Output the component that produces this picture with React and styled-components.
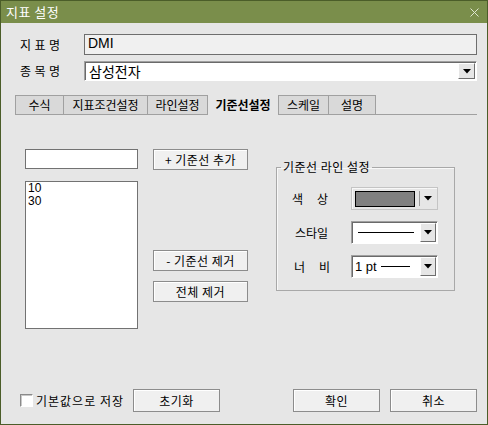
import React from "react";
import styled, { createGlobalStyle } from "styled-components";

const GlobalStyle = createGlobalStyle`
  html, body {
    margin: 0;
    padding: 0;
    background: #e6e6e6;
  }
  body {
    font-family: "Noto Sans CJK KR", "Liberation Sans", sans-serif;
    font-size: 12px;
    color: #000;
  }
  * {
    box-sizing: border-box;
  }
`

const Window = styled.div`
  width: 488px;
  height: 425px;
  display: flex;
  flex-direction: column;
  border: 1px solid #4b5d29;
  background: #e6e6e6;
`

const TitleBar = styled.div`
  height: 22px;
  flex: 0 0 22px;
  display: flex;
  align-items: center;
  justify-content: space-between;
  padding: 0 8px 0 5px;
  background: #7a8e4b;
  color: #fff;
  font-size: 13px;
  line-height: 16px;
  letter-spacing: 0.5px;
`

const Body = styled.div`
  flex: 1;
  display: flex;
  flex-direction: column;
  padding: 11px 10px 12px 14px;
`

const FieldRow = styled.div`
  display: flex;
  align-items: stretch;
  height: ${p => p.$h}px;
  margin-top: ${p => p.$mt || 0}px;
`

const Label = styled.div`
  flex: 0 0 69px;
  padding-left: 5px;
  display: flex;
  align-items: center;
  line-height: 14px;
  letter-spacing: 3.5px;
`

const ReadOnlyField = styled.div`
  flex: 1;
  background: #f0f0f0;
  border: 1px solid #6e6e6e;
  padding: 0 3px;
  font-family: "Liberation Sans", sans-serif;
  font-size: 14px;
  line-height: 16px;
`

const Combo = styled.div`
  flex: ${p => (p.$w ? `0 0 ${p.$w}px` : 1)};
  height: ${p => (p.$h ? `${p.$h}px` : "auto")};
  display: flex;
  align-items: center;
  justify-content: space-between;
  background: #fff;
  border: 1px solid;
  border-color: #a0a0a0 #fff #fff #a0a0a0;
  box-shadow: inset 1px 1px 0 #6a6a6a;
  padding: 1px 1px 1px ${p => p.$pl || 4}px;
  font-size: ${p => p.$fs || 12}px;
  line-height: 16px;
`

const DropButton = styled.div`
  flex: 0 0 ${p => p.$w || 16}px;
  height: ${p => p.$h || 16}px;
  display: flex;
  align-items: center;
  justify-content: center;
  background: #e6e6e6;
  border: 1px solid;
  border-color: #fff #6e6e6e #6e6e6e #fff;
`

const Arrow = () => (
  <svg width="8" height="5" viewBox="0 0 8 5">
    <polygon points="0,0 8,0 4,4.5" fill="#000" />
  </svg>
)

const TabStrip = styled.div`
  display: flex;
  margin-top: 14px;
  height: 20px;
`

const Tab = styled.div`
  flex: 0 0 ${p => p.$w}px;
  margin-right: -1px;
  display: flex;
  align-items: center;
  justify-content: center;
  border: 1px solid ${p => (p.$active ? "transparent" : "#a0a0a0")};
  background: ${p => (p.$active ? "#e6e6e6" : "#d9d9d9")};
  font-weight: ${p => (p.$active ? 700 : 400)};
  line-height: 14px;
  position: relative;
  z-index: ${p => (p.$active ? 0 : 1)};
`

const TabFiller = styled.div`
  flex: 1;
  border-bottom: 1px solid #a0a0a0;
  margin-left: 1px;
`

const Panel = styled.div`
  display: flex;
  align-items: flex-start;
  padding: 34px 0 0 10px;
`

const LeftCol = styled.div`
  width: 113px;
  display: flex;
  flex-direction: column;
`

const TextInput = styled.div`
  height: 20px;
  background: #fff;
  border: 1px solid #727272;
`

const ListBox = styled.div`
  margin-top: 12px;
  height: 148px;
  background: #fff;
  border: 1px solid #727272;
  padding: 0 2px;
  font-family: "Liberation Sans Narrow", "Liberation Sans", sans-serif;
  font-size: 12px;
  line-height: 13px;
`

const MidCol = styled.div`
  margin-left: 15px;
  width: 95px;
  display: flex;
  flex-direction: column;
`

const Button = styled.div`
  flex: 0 0 auto;
  width: ${p => p.$w || 95}px;
  height: ${p => p.$h || 21}px;
  margin-top: ${p => p.$mt || 0}px;
  margin-left: ${p => p.$ml || 0}px;
  display: flex;
  align-items: center;
  justify-content: center;
  background: #f0f0f0;
  border: 1px solid #8c8c8c;
  box-shadow: inset 1px 1px 0 #fff;
  line-height: 14px;
  letter-spacing: 0.5px;
  white-space: pre;
`

const GroupBox = styled.fieldset`
  margin: 11px 0 0 28px;
  padding: 0;
  width: 179px;
  height: 131px;
  min-inline-size: 0;
  border: 1px solid #a8a8a8;
  box-shadow: inset 1px 1px 0 #f8f8f8;
`

const Legend = styled.legend`
  margin-left: 4px;
  padding: 0 2px;
  line-height: 14px;
  letter-spacing: 0.5px;
`

const GroupRows = styled.div`
  display: flex;
  flex-direction: column;
  gap: 11px;
  padding: 13px 0 0 15px;
`

const GroupRow = styled.div`
  display: flex;
  align-items: center;
  height: 23px;
`

const GroupLabel = styled.div`
  flex: 0 0 59px;
  padding-left: ${p => p.$pl || 0}px;
  line-height: 14px;
  letter-spacing: ${p => p.$ls || 0}px;
  white-space: nowrap;
`

const ColorCombo = styled.div`
  flex: 0 0 87px;
  height: 23px;
  display: flex;
  align-items: center;
  padding: 0 0 0 3px;
  border: 1px solid #c4c4c4;
  box-shadow: inset 1px 1px 0 #f8f8f8;
`

const Swatch = styled.div`
  width: 60px;
  height: 16px;
  background: ${p => p.$color};
  border: 1px solid #000;
`

const Separator = styled.div`
  width: 1px;
  height: 15px;
  margin: 0 4px;
  background: #9a9a9a;
`

const LineSample = styled.div`
  flex: 1;
  height: 1px;
  background: #000;
  margin: ${p => p.$m};
`

const PtText = styled.span`
  font-family: "Liberation Sans", sans-serif;
  font-size: 13px;
`

const BottomRow = styled.div`
  margin-top: auto;
  display: flex;
  align-items: center;
  height: 23px;
`

const Check = styled.div`
  width: 13px;
  height: 13px;
  margin-left: 5px;
  background: #fff;
  border: 1px solid;
  border-color: #8a8a8a #fff #fff #8a8a8a;
  box-shadow: inset 1px 1px 0 #c8c8c8;
`

const CheckLabel = styled.div`
  flex: 0 0 100px;
  padding-left: 3px;
  line-height: 14px;
  letter-spacing: 1px;
  white-space: nowrap;
`

const Spacer = styled.div`
  flex: 1;
`

const App = () => {
  const tabs = [
    { name: "수식", w: 49 },
    { name: "지표조건설정", w: 85 },
    { name: "라인설정", w: 61 },
    { name: "기준선설정", w: 72, active: true },
    { name: "스케일", w: 51 },
    { name: "설명", w: 48 },
  ];
  const lines = ["10", "30"];

  return (
    <React.Fragment>
      <GlobalStyle />
      <Window>
        <TitleBar>
          <span>지표 설정</span>
          <svg width="9" height="9" viewBox="0 0 9 9">
            <path d="M0.5 0.5 L8.5 8.5 M8.5 0.5 L0.5 8.5" stroke="#dfe6d0" strokeWidth="1" />
          </svg>
        </TitleBar>
        <Body>
          <FieldRow $h={21}>
            <Label>지표명</Label>
            <ReadOnlyField>DMI</ReadOnlyField>
          </FieldRow>
          <FieldRow $h={20} $mt={6}>
            <Label>종목명</Label>
            <Combo $fs={14}>
              <span>삼성전자</span>
              <DropButton $w={17} $h={16}><Arrow /></DropButton>
            </Combo>
          </FieldRow>

          <TabStrip>
            {tabs.map(tab => (
              <Tab key={tab.name} $w={tab.w} $active={tab.active}>{tab.name}</Tab>
            ))}
            <TabFiller />
          </TabStrip>

          <Panel>
            <LeftCol>
              <TextInput />
              <ListBox>
                {lines.map(v => <div key={v}>{v}</div>)}
              </ListBox>
            </LeftCol>
            <MidCol>
              <Button>{"+ 기준선 추가"}</Button>
              <Button $mt={80}>{"- 기준선 제거"}</Button>
              <Button $mt={10}>{"전체 제거"}</Button>
            </MidCol>
            <GroupBox>
              <Legend>기준선 라인 설정</Legend>
              <GroupRows>
                <GroupRow>
                  <GroupLabel $ls={14}>색상</GroupLabel>
                  <ColorCombo>
                    <Swatch $color="#808080" />
                    <Separator />
                    <Arrow />
                  </ColorCombo>
                </GroupRow>
                <GroupRow>
                  <GroupLabel $pl={3}>스타일</GroupLabel>
                  <Combo $w={87} $h={23} $pl={6}>
                    <LineSample $m="0 6px 0 0" />
                    <DropButton $w={16} $h={19}><Arrow /></DropButton>
                  </Combo>
                </GroupRow>
                <GroupRow>
                  <GroupLabel $ls={14} $pl={2}>너비</GroupLabel>
                  <Combo $w={87} $h={23} $pl={3}>
                    <PtText>1 pt</PtText>
                    <LineSample $m="0 10px 0 4px" />
                    <DropButton $w={16} $h={19}><Arrow /></DropButton>
                  </Combo>
                </GroupRow>
              </GroupRows>
            </GroupBox>
          </Panel>

          <BottomRow>
            <Check />
            <CheckLabel>기본값으로 저장</CheckLabel>
            <Button $w={87} $h={23}>초기화</Button>
            <Spacer />
            <Button $w={87} $h={23}>확인</Button>
            <Button $w={87} $h={23} $ml={10}>취소</Button>
          </BottomRow>
        </Body>
      </Window>
    </React.Fragment>
  );
}

export default App;
